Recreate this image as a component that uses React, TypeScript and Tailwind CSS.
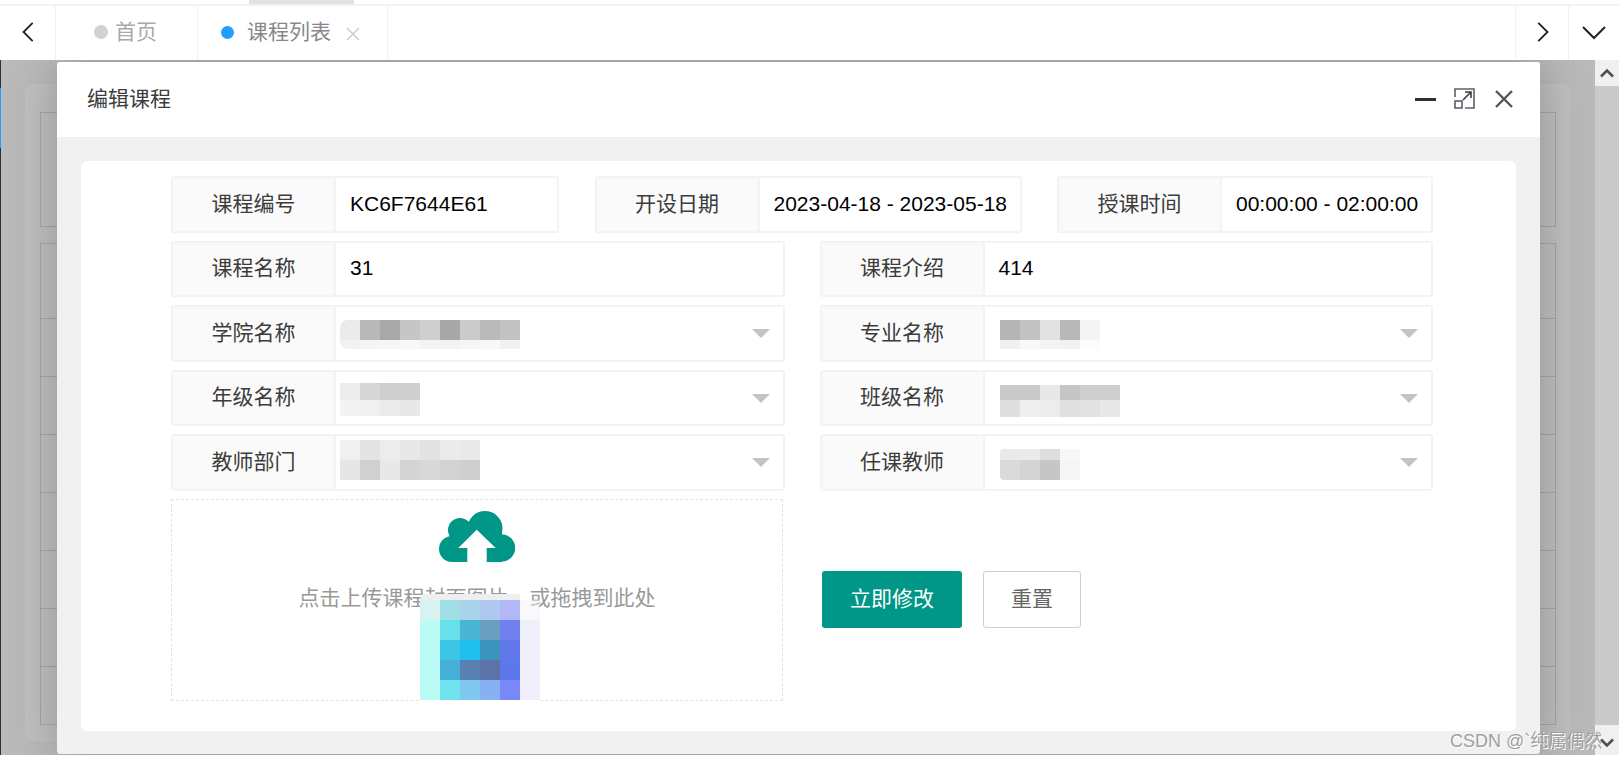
const fieldBox = 'flex h-[56.5px] border-2 border-[#f3f3f3] rounded-[3px] bg-white';
const labelBox = 'flex items-center justify-center w-[163px] shrink-0 pb-[2px] bg-[#fafafa] border-r-2 border-[#f3f3f3] text-[#3c3c3c]';

function Chevron({ d, className }: { d: string; className: string }) {
    return (
        <svg viewBox="0 0 24 24" fill="none" stroke="#222" strokeWidth="2" className={className}>
            <path d={d} />
        </svg>
    );
}

function Mosaic({ rows, cols, className }: { rows: { h: string; colors: string[] }[]; cols: number; className: string }) {
    return (
        <div className={className}>
            {rows.map((row, i) => (
                <div key={i} className={`${row.h} grid`} style={{ gridTemplateColumns: `repeat(${cols}, 20px)` }}>
                    {row.colors.map((c, j) => (
                        <div key={j} style={{ backgroundColor: c }} />
                    ))}
                </div>
            ))}
        </div>
    );
}

function Field({ label, value, width }: { label: string; value: string; width: string }) {
    return (
        <div className={`${fieldBox} ${width}`}>
            <div className={labelBox}>{label}</div>
            <div className="flex items-center pl-[14px] pb-[2px] text-black whitespace-nowrap">{value}</div>
        </div>
    );
}

function SelectField({ label, mosaic }: { label: string; mosaic: React.ReactNode }) {
    return (
        <div className={`${fieldBox} flex-1`}>
            <div className={labelBox}>{label}</div>
            <div className="flex flex-1 items-start">
                {mosaic}
                <div className="ml-auto mr-[13px] self-center w-0 h-0 border-x-[9px] border-x-transparent border-t-[9px] border-t-[#c4c4c4] mt-[1px]" />
            </div>
        </div>
    );
}

function UploadBox() {
    return (
        <div className="relative w-[612px] h-[202px] border border-dashed border-[#e2e2e2] flex flex-col items-center pt-[11px] text-[#999]">
            <svg viewBox="0 0 76 51" className="w-[76px] h-[51px]" fill="#009688">
                <circle cx="46" cy="17.5" r="17.5" />
                <circle cx="21" cy="19" r="12" />
                <circle cx="13" cy="38" r="13" />
                <circle cx="62.5" cy="37" r="13.7" />
                <rect x="13" y="18" width="50" height="33" />
                <path d="M37.7 18.7 19.3 37h9v14h19.4V37h9z" fill="#fff" />
            </svg>
            <div className="mt-[22px] leading-[28px]">点击上传课程封面图片，或拖拽到此处</div>

            {/* 打码的封面图 */}
            <div className="absolute left-[248px] top-[94px] w-[120px]">
                <div className="w-[100px] h-[6px] bg-[#eeeeee] rounded-tl-[14px]" />
                <Mosaic
                    cols={6}
                    className="w-[120px]"
                    rows={[
                        { h: 'h-[20px]', colors: ['#d8f2f2', '#a0dfe6', '#a8d3ea', '#aec8f0', '#b2b8f5', 'rgba(243,244,251,0.5)'] },
                        { h: 'h-[20px]', colors: ['#bcfbf5', '#68e0ea', '#4ab5d5', '#6a9fc0', '#7080f0', '#f0f0fd'] },
                        { h: 'h-[20px]', colors: ['#bcfbf5', '#3cc4e4', '#20c0ee', '#3a94bc', '#6378e8', '#f0f0fd'] },
                        { h: 'h-[20px]', colors: ['#bcfbf5', '#44b0d8', '#5a80b0', '#5a74aa', '#5c78ec', '#f0f0fd'] },
                        { h: 'h-[20px]', colors: ['#bcfbf5', '#70e4ee', '#80c8f0', '#88b0f5', '#7888f8', '#f0f0fd'] },
                    ]}
                />
                <div className="h-[12px] bg-white rounded-b-[12px]" />
            </div>
        </div>
    );
}

function BackgroundPage() {
    return (
        <div className="flex-1 pl-[24px] pr-[24px] pt-[24px] pb-[14px] bg-[#bababa]">
            <div className="h-full bg-[#c0c0c0] rounded-[8px] px-[15px] pt-[28px]">
                <div className="h-[115px] border border-[#a6a6a6]" />
                <div className="mt-[16px] h-[482px] border border-[#a6a6a6] flex flex-col">
                    <div className="h-[75px] border-b border-[#a6a6a6]" />
                    <div className="flex-1 border-b border-[#a6a6a6]" />
                    <div className="flex-1 border-b border-[#a6a6a6]" />
                    <div className="flex-1 border-b border-[#a6a6a6]" />
                    <div className="flex-1 border-b border-[#a6a6a6]" />
                    <div className="flex-1 border-b border-[#a6a6a6]" />
                    <div className="flex-1 border-b border-[#a6a6a6]" />
                    <div className="flex-1" />
                </div>
            </div>
        </div>
    );
}

export default function App() {
    return (
        <div className="relative w-[1619px] h-[760px] overflow-hidden bg-white text-[21px] font-['Liberation_Sans','Noto_Sans_CJK_SC',sans-serif]">
            {/* 顶部 */}
            <div className="h-[6px] border-b-2 border-[#f3f3f3] pl-[249px]">
                <div className="w-[105px] h-[4px] bg-[#e2e2e2]" />
            </div>

            {/* 标签栏 */}
            <div className="flex h-[54px] bg-white">
                <div className="w-[56px] flex items-center justify-center pl-[3px] pb-[2px] border-r border-[#f0f0f0]">
                    <Chevron d="M16 2 6 12l10 10" className="w-[22px] h-[22px]" />
                </div>
                <div className="w-[142px] flex items-center pl-[38px] pb-[2px] border-r border-[#f0f0f0]">
                    <span className="w-[14px] h-[14px] rounded-full bg-[#d2d2d2]" />
                    <span className="ml-[7px] text-[#aaa]">首页</span>
                </div>
                <div className="w-[190px] flex items-center pl-[23px] pb-[2px] border-r border-[#f0f0f0]">
                    <span className="w-[13px] h-[13px] rounded-full bg-[#1e9fff]" />
                    <span className="ml-[13px] text-[#888]">课程列表</span>
                    <svg viewBox="0 0 14 14" stroke="#ccc" strokeWidth="1.5" className="ml-[15px] mt-[3px] w-[14px] h-[14px]">
                        <path d="M1 1l12 12M13 1 1 13" />
                    </svg>
                </div>
                <div className="flex-1" />
                <div className="w-[53px] flex items-center justify-center pb-[2px] border-l border-[#f0f0f0]">
                    <Chevron d="M8 2l10 10L8 22" className="w-[22px] h-[22px]" />
                </div>
                <div className="w-[51px] flex items-center justify-center pb-[2px] border-l border-[#f0f0f0]">
                    <Chevron d="M1 7l11 11L23 7" className="w-[24px] h-[24px]" />
                </div>
            </div>

            {/* 遮罩下的页面，弹窗的阴影不出这个区域 */}
            <div className="relative flex h-[695px] overflow-hidden">
                <div className="w-px bg-[#26323e] pt-[28px]">
                    <div className="h-[60px] bg-[#1e9fff]" />
                </div>
                <BackgroundPage />
                <div className="w-[24px] bg-[#cacaca] flex flex-col justify-between">
                    <div className="h-[26px] bg-[#f0f0f0] flex items-center justify-center">
                        <svg viewBox="0 0 14 10" fill="none" stroke="#505050" strokeWidth="2.6" className="w-[14px] h-[10px]">
                            <path d="M1 8.5 7 2.5l6 6" />
                        </svg>
                    </div>
                    <div className="h-[30px] bg-[#f0f0f0] flex items-center justify-center">
                        <svg viewBox="0 0 14 10" fill="none" stroke="#505050" strokeWidth="2.6" className="w-[14px] h-[10px] mt-[6px]">
                            <path d="M1 1.5l6 6 6-6" />
                        </svg>
                    </div>
                </div>

                {/* 弹窗 */}
                <div className="absolute left-[57px] top-[2px] w-[1483px] h-[692px] rounded-[3px] bg-[#f1f1f1] flex flex-col shadow-[1px_1px_50px_rgba(0,0,0,0.25)]">
                    <div className="h-[75px] shrink-0 bg-white rounded-t-[3px] flex items-center pl-[30px] pb-[2px] text-[#3c3c3c]">
                        <span>编辑课程</span>
                        <div className="ml-auto flex items-center mr-[27px]">
                            <div className="w-[21px] h-[3px] bg-[#2e2d3c] mt-[2px]" />
                            <svg viewBox="0 0 21 21" fill="none" stroke="#5f5f6b" strokeWidth="1.6" className="ml-[18px] w-[21px] h-[21px]">
                                <path d="M1 9V1h19v19h-9" />
                                <rect x="1" y="13" width="7" height="7" />
                                <path d="M9 12 17 4M11 4h6v6" stroke="#3b3b47" />
                            </svg>
                            <svg viewBox="0 0 18 18" fill="none" stroke="#555560" strokeWidth="2.4" className="ml-[20px] w-[18px] h-[18px]">
                                <path d="M1 1l16 16M17 1 1 17" />
                            </svg>
                        </div>
                    </div>

                    <div className="flex-1 px-[24px] pt-[24px]">
                        <div className="h-[570px] bg-white rounded-[6px] pl-[90px] pr-[83px] pt-[15px]">
                            <div className="flex justify-between mb-[8px]">
                                <Field label="课程编号" value="KC6F7644E61" width="w-[388px]" />
                                <Field label="开设日期" value="2023-04-18 - 2023-05-18" width="w-[427px]" />
                                <Field label="授课时间" value="00:00:00 - 02:00:00" width="w-[376px]" />
                            </div>
                            <div className="flex gap-[35px] mb-[8px]">
                                <Field label="课程名称" value="31" width="flex-1" />
                                <Field label="课程介绍" value="414" width="flex-1" />
                            </div>
                            <div className="flex gap-[35px] mb-[8px]">
                                <SelectField
                                    label="学院名称"
                                    mosaic={
                                        <Mosaic
                                            cols={9}
                                            className="ml-[4px] mt-[13px] rounded-l-[8px] overflow-hidden"
                                            rows={[
                                                { h: 'h-[20px]', colors: ['#ebebeb', '#b9b9b9', '#a9a9a9', '#c6c6c6', '#cfcfcf', '#a8a8a8', '#cbcbcb', '#bababa', '#c2c2c2'] },
                                                { h: 'h-[9px]', colors: ['#f2f2f2', '#f5f5f5', '#f6f6f6', '#f8f8f8', '#f3f3f3', '#f3f3f3', '#f6f6f6', '#f8f8f8', '#f1f1f1'] },
                                            ]}
                                        />
                                    }
                                />
                                <SelectField
                                    label="专业名称"
                                    mosaic={
                                        <Mosaic
                                            cols={5}
                                            className="ml-[15px] mt-[13px]"
                                            rows={[
                                                { h: 'h-[20px]', colors: ['#b5b5b5', '#c2c2c2', '#e2e2e2', '#b8b8b8', '#f4f4f4'] },
                                                { h: 'h-[9px]', colors: ['#f0f0f0', '#f8f8f8', '#f3f3f3', '#f2f2f2', '#fcfcfc'] },
                                            ]}
                                        />
                                    }
                                />
                            </div>
                            <div className="flex gap-[35px] mb-[8px]">
                                <SelectField
                                    label="年级名称"
                                    mosaic={
                                        <Mosaic
                                            cols={4}
                                            className="ml-[4px] mt-[11px]"
                                            rows={[
                                                { h: 'h-[17px]', colors: ['#ededed', '#d6d6d6', '#cecece', '#cfcfcf'] },
                                                { h: 'h-[16px]', colors: ['#f3f3f3', '#f0f0f0', '#ebebeb', '#e8e8e8'] },
                                            ]}
                                        />
                                    }
                                />
                                <SelectField
                                    label="班级名称"
                                    mosaic={
                                        <Mosaic
                                            cols={6}
                                            className="ml-[15px] mt-[13px]"
                                            rows={[
                                                { h: 'h-[15px]', colors: ['#c9c9c9', '#c9c9c9', '#e8e8e8', '#c5c5c5', '#cfcfcf', '#cfcfcf'] },
                                                { h: 'h-[17px]', colors: ['#dedede', '#efefef', '#ececec', '#e0e0e0', '#e2e2e2', '#e8e8e8'] },
                                            ]}
                                        />
                                    }
                                />
                            </div>
                            <div className="flex gap-[35px] mb-[8px]">
                                <SelectField
                                    label="教师部门"
                                    mosaic={
                                        <Mosaic
                                            cols={7}
                                            className="ml-[4px] mt-[4px]"
                                            rows={[
                                                { h: 'h-[20px]', colors: ['#f0f0f0', '#e4e4e4', '#ececec', '#e8e8e8', '#e2e2e2', '#ebebeb', '#e9e9e9'] },
                                                { h: 'h-[20px]', colors: ['#e6e6e6', '#d0d0d0', '#e8e8e8', '#d4d4d4', '#d8d8d8', '#d2d2d2', '#cfcfcf'] },
                                            ]}
                                        />
                                    }
                                />
                                <SelectField
                                    label="任课教师"
                                    mosaic={
                                        <Mosaic
                                            cols={4}
                                            className="ml-[15px] mt-[13px] rounded-l-[4px] overflow-hidden"
                                            rows={[
                                                { h: 'h-[11px]', colors: ['#eaeaea', '#ebebeb', '#dedede', '#f8f8f8'] },
                                                { h: 'h-[20px]', colors: ['#dadada', '#d4d4d4', '#c6c6c6', '#f6f6f6'] },
                                            ]}
                                        />
                                    }
                                />
                            </div>

                            <div className="flex items-start">
                                <UploadBox />
                                <div className="ml-[39px] mt-[72px] flex gap-[21px]">
                                    <button className="w-[140px] h-[57px] rounded-[3px] bg-[#009688] text-white">立即修改</button>
                                    <button className="w-[98px] h-[57px] rounded-[3px] border border-[#d0d0d0] bg-white text-[#666]">重置</button>
                                </div>
                            </div>
                        </div>
                    </div>
                </div>
            </div>

            {/* 水印 */}
            <div className="absolute left-[1450px] top-[729px] text-[18px] leading-[24px] text-[#a0a0a0] [text-shadow:1px_1px_0_#ffffff]">
                CSDN @`纯属偶然
            </div>
        </div>
    );
}
